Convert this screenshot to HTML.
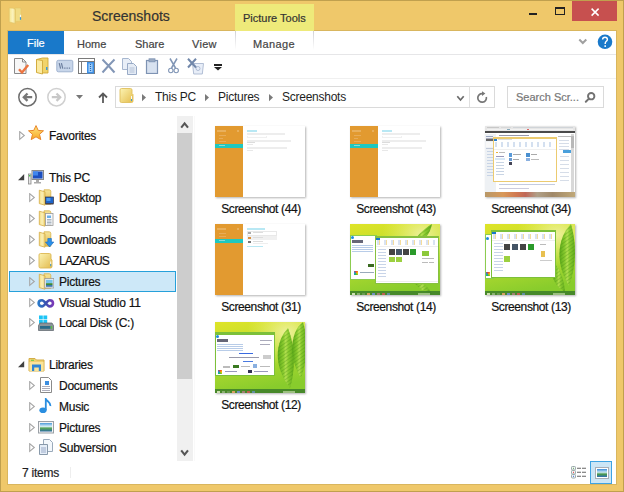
<!DOCTYPE html>
<html><head><meta charset="utf-8">
<style>
*{margin:0;padding:0;box-sizing:border-box}
html,body{width:624px;height:492px;overflow:hidden}
body{position:relative;background:#efc86a;font-family:"Liberation Sans",sans-serif;font-size:11.5px;color:#111}
.a{position:absolute}
.t{position:absolute;white-space:nowrap;line-height:12px;-webkit-text-stroke:0.2px currentColor}
.n{position:absolute;white-space:nowrap;line-height:12px;font-size:12px;letter-spacing:-0.25px;-webkit-text-stroke:0.2px currentColor}
</style></head><body>
<div class="a" style="left:0;top:0;width:624px;height:492px;border:1px solid #c0a04e"></div>
<!-- app icon -->
<svg class="a" style="left:8px;top:7px" width="15" height="17"><defs><linearGradient id="ai" x1="0" y1="0" x2="1" y2="0"><stop offset="0" stop-color="#f6e690"/><stop offset=".6" stop-color="#fbf3c0"/><stop offset="1" stop-color="#e9d070"/></linearGradient></defs>
<path d="M7 1h5.5l0.5 .5v12.5l-6 0.5z" fill="#f1dc84" stroke="#e2c868" stroke-width=".6"/>
<path d="M1.2 1l4 .2l2.3 1.3v14l-6.3-1.5z" fill="url(#ai)" stroke="#e0c468" stroke-width=".6"/>
<rect x="11.9" y="7.8" width="1.2" height="2.4" fill="#f8f8f0"/><rect x="11.9" y="10.2" width="1.2" height="2.6" fill="#3a9ad8"/></svg>
<div class="t" style="left:92px;top:8px;font-size:14px;line-height:16px;color:#333">Screenshots</div>
<!-- picture tools -->
<!-- window buttons -->
<div class="a" style="left:529px;top:13px;width:8px;height:2px;background:#222"></div>
<div class="a" style="left:555px;top:7px;width:10px;height:8px;border:1px solid #222;border-top-width:2px"></div>
<div class="a" style="left:572px;top:1px;width:45px;height:20px;background:#c7504f"></div>
<svg class="a" style="left:591px;top:7.5px" width="9" height="9"><path d="M0.6 0.6L7.6 7.6M7.6 0.6L0.6 7.6" stroke="#fff" stroke-width="1.5"/></svg>
<!-- client -->
<div class="a" style="left:7px;top:30px;width:610px;height:455px;background:#fff;border:1px solid #d9b65e"></div>
<div class="a" style="left:235px;top:4px;width:79px;height:27px;background:#eeea7a"></div>
<div class="t" style="left:243px;top:12px;color:#333;font-size:11px">Picture Tools</div>
<!-- ribbon tabs -->
<div class="a" style="left:8px;top:31px;width:56px;height:23px;background:#1979ca"></div>
<div class="t" style="left:27px;top:37px;color:#fff;font-size:11px">File</div>
<div class="t" style="left:77px;top:38px;color:#444;font-size:11px">Home</div>
<div class="t" style="left:135px;top:38px;color:#444;font-size:11px">Share</div>
<div class="t" style="left:192px;top:38px;color:#444;font-size:11px;letter-spacing:0.3px">View</div>
<div class="t" style="left:253px;top:38px;color:#444;font-size:11px;letter-spacing:0.35px">Manage</div>
<div class="a" style="left:235px;top:31px;width:1px;height:19px;background:linear-gradient(#d0d0d4,#fff)"></div>
<div class="a" style="left:313px;top:31px;width:1px;height:19px;background:linear-gradient(#d0d0d4,#fff)"></div>
<svg class="a" style="left:578px;top:38px" width="10" height="8"><path d="M1.3 1.5L4.8 5L8.3 1.5" stroke="#a0a0a0" stroke-width="2" fill="none"/></svg>
<svg class="a" style="left:597px;top:34px" width="16" height="16"><circle cx="8" cy="7.8" r="7.3" fill="#1979ca"/><path d="M5.6 5.6C5.6 4 6.7 3.2 8 3.2C9.4 3.2 10.4 4.1 10.4 5.4C10.4 7.2 8.2 7.3 8.2 9.4V10" stroke="#fff" stroke-width="1.4" fill="none"/><rect x="7.4" y="11.3" width="1.6" height="1.6" fill="#fff"/></svg>
<div class="a" style="left:8px;top:54px;width:608px;height:1px;background:#e6e6e8"></div>
<div class="a" style="left:8px;top:78px;width:608px;height:1px;background:#f0f0f0"></div>
<!-- QAT icons placeholder -->
<svg class="a" style="left:13px;top:57px" width="17" height="18"><path d="M1.5 1.5h8l3.5 3.5v11.5H1.5z" fill="#f7f7f7" stroke="#8a8a8a"/><path d="M9.5 1.5v3.5h3.5" fill="none" stroke="#8a8a8a"/><path d="M6 12.3l3 3.2l6.2-7.5" stroke="#ec7440" stroke-width="2.4" fill="none"/></svg>
<svg class="a" style="left:35px;top:57px" width="15" height="18"><path d="M1.5 2.5l6-1.5h5.5v15h-5.5l-6-1z" fill="#f1d46a" stroke="#d0a838" stroke-width=".9"/><path d="M1.5 2.5l6 1v13.5l-6-1.5z" fill="#fbeaa0" stroke="#d0a838" stroke-width=".9"/><rect x="11" y="10" width="1.5" height="3" fill="#3a9ad8"/></svg>
<svg class="a" style="left:56px;top:59px" width="18" height="15"><rect x="0.8" y="1.3" width="16" height="11.5" rx="1.5" fill="#c8d6ea" stroke="#9fb2cf"/><path d="M3.2 4.2L4.6 9.6M5.4 4.2L6.8 9.6M8.2 9.2h1.3M10.5 9.2h1.3M12.8 9.2h1.3" stroke="#6b7e9e" stroke-width="1.2" fill="none"/></svg>
<svg class="a" style="left:78px;top:58px" width="17" height="16"><rect x="0.5" y="0.5" width="16" height="15" fill="#fff" stroke="#7a7a7a"/><path d="M0.5 3.5h16M3.5 3.5v12" stroke="#7a7a7a"/><rect x="9" y="4" width="7" height="11.5" fill="#3d8fe6"/><rect x="10.5" y="5.5" width="4" height="8.5" fill="#9fcdf8"/><path d="M12.5 6v7.5" stroke="#2666b0" stroke-width="1.2" stroke-dasharray="1 1"/></svg>
<svg class="a" style="left:101px;top:58px" width="15" height="16"><path d="M1.5 1.5Q7.5 7.5 13.5 14.5M13.5 1.5Q7.5 7.5 1.5 14.5" stroke="#8296b6" stroke-width="2"/></svg>
<svg class="a" style="left:122px;top:58px" width="16" height="17"><path d="M0.5 0.5h6l3 3v8h-9z" fill="#e8eef7" stroke="#a6b6cf"/><path d="M5.5 5.5h6l3 3v8h-9z" fill="#e4ebf5" stroke="#98aac6"/><path d="M7.5 10h5M7.5 12h5M7.5 14h5" stroke="#a6b6cf" stroke-width=".8"/></svg>
<svg class="a" style="left:145px;top:58px" width="14" height="16"><rect x="1.5" y="2.5" width="11" height="13" fill="#d8e2f0" stroke="#7e93b3" stroke-width="1.2"/><rect x="4" y="0.8" width="6" height="3" fill="#9aaac2" stroke="#7e93b3" stroke-width=".8"/></svg>
<svg class="a" style="left:168px;top:58px" width="11" height="16"><path d="M2 0.5L7.5 10M9 0.5L3.5 10" stroke="#8196b6" stroke-width="1.5"/><circle cx="2.8" cy="12.5" r="2.2" fill="none" stroke="#8196b6" stroke-width="1.1"/><circle cx="8.2" cy="12.5" r="2.2" fill="none" stroke="#8196b6" stroke-width="1.1"/></svg>
<svg class="a" style="left:187px;top:58px" width="18" height="17"><path d="M5.5 5.5h11l-1.2 10.5h-8.6z" fill="#e8eef8" stroke="#aab8d0" stroke-width=".9"/><circle cx="11" cy="10.5" r="2" fill="none" stroke="#aab8d0" stroke-width=".9"/><path d="M1 0.8L9 9.5M9 0.8L1 9.5" stroke="#7187aa" stroke-width="2"/></svg>
<svg class="a" style="left:214px;top:63px" width="9" height="8"><rect x="0" y="1" width="8" height="2" fill="#222"/><path d="M0 4H8L4 7.5z" fill="#222"/></svg>
<!-- nav buttons -->
<svg class="a" style="left:17px;top:86.8px" width="22" height="22"><circle cx="10.5" cy="10.2" r="8.7" fill="none" stroke="#6d6d6d" stroke-width="1.5"/><path d="M15.2 10.2H7M10.5 6.5L6.8 10.2L10.5 13.9" stroke="#777" stroke-width="2.3" fill="none"/></svg>
<svg class="a" style="left:45.5px;top:86.8px" width="22" height="22"><circle cx="10.5" cy="10.2" r="8.7" fill="none" stroke="#d0d0d0" stroke-width="1.5"/><path d="M5.8 10.2H14M10.5 6.5L14.2 10.2L10.5 13.9" stroke="#c8c8c8" stroke-width="2.3" fill="none"/></svg>
<svg class="a" style="left:75px;top:94px" width="10" height="6"><path d="M1 1H8L4.5 5z" fill="#777"/></svg>
<svg class="a" style="left:96.5px;top:91px" width="12" height="13"><path d="M6 12V2.5M2 6.5L6 2.5L10 6.5" stroke="#5a5a5a" stroke-width="1.8" fill="none"/></svg>
<!-- address -->
<div class="a" style="left:115px;top:86px;width:380px;height:22px;border:1px solid #dadada"></div>
<div class="a" style="left:469px;top:86px;width:1px;height:21px;background:#e0e0e0"></div>
<svg class="a" style="left:118.5px;top:87px" width="16" height="17"><defs><linearGradient id="fg" x1="0" y1="0" x2="1" y2="1"><stop offset="0" stop-color="#fcf4b4"/><stop offset="1" stop-color="#e4bd4e"/></linearGradient></defs><path d="M2.5 1.5h9a1.5 1.5 0 0 1 1.5 1.5v3.5l1 1v6.5a1.5 1.5 0 0 1-1.5 1.5h-10a1.5 1.5 0 0 1-1.5-1.5v-11a1.5 1.5 0 0 1 1.5-1.5z" fill="url(#fg)" stroke="#e0bf5c" stroke-width=".9"/><rect x="12" y="9" width="1" height="5" fill="#f8f8f8"/><rect x="12" y="12" width="1" height="2" fill="#3c9ad4"/></svg>
<svg class="a" style="left:142px;top:94px" width="5" height="8"><path d="M0 0L4 3.6L0 7.2z" fill="#7a7a7a"/></svg>
<div class="n" style="left:155px;top:91px;color:#1e1e1e;-webkit-text-stroke:0">This PC</div>
<svg class="a" style="left:205px;top:94px" width="5" height="8"><path d="M0 0L4 3.6L0 7.2z" fill="#7a7a7a"/></svg>
<div class="n" style="left:218px;top:91px;color:#1e1e1e;-webkit-text-stroke:0">Pictures</div>
<svg class="a" style="left:269px;top:94px" width="5" height="8"><path d="M0 0L4 3.6L0 7.2z" fill="#7a7a7a"/></svg>
<div class="n" style="left:282px;top:91px;color:#1e1e1e;-webkit-text-stroke:0">Screenshots</div>
<svg class="a" style="left:456px;top:94px" width="10" height="9"><path d="M1.3 2.2L4.5 6L7.7 2.2" stroke="#6a6a6a" stroke-width="1.7" fill="none"/></svg>
<svg class="a" style="left:475px;top:89px" width="14" height="15"><path d="M7.3 4.6A4.3 4.3 0 1 0 11.3 8" stroke="#777" stroke-width="1.7" fill="none"/><path d="M7 2.2L10.4 4.6L7 7z" fill="#777"/></svg>
<div class="a" style="left:507px;top:86px;width:97px;height:22px;border:1px solid #dadada"></div>
<div class="t" style="left:516px;top:91px;color:#777;font-size:11px">Search Scr...</div>
<svg class="a" style="left:583px;top:90px" width="13" height="14"><circle cx="8.2" cy="6.2" r="3.2" fill="none" stroke="#727272" stroke-width="1.9"/><path d="M6 8.6L2.8 11.8" stroke="#727272" stroke-width="2" stroke-linecap="round"/></svg>
<!-- nav pane placeholder -->
<svg class="a" style="left:19px;top:131px" width="7" height="10">
<path d="M0.7 0.7L5.3 4.5L0.7 8.3z" fill="none" stroke="#a6a6a6" stroke-width="1.1"/>
</svg>
<svg class="a" style="left:28px;top:125.0px" width="16" height="16">
<defs>
<linearGradient id="sg" x1="0" y1="0" x2="0" y2="1">
<stop offset="0" stop-color="#ffe680"/>
<stop offset="1" stop-color="#f6a623"/>
</linearGradient>
</defs>
<path d="M8 0.6L10.2 5.4L15.5 5.8L11.5 9.3L12.8 14.6L8 11.8L3.2 14.6L4.5 9.3L0.5 5.8L5.8 5.4z" fill="url(#sg)" stroke="#e8862a" stroke-width="1"/>
</svg>
<div class="n" style="left:49px;top:130px">Favorites</div>
<svg class="a" style="left:18px;top:174px" width="7" height="7">
<path d="M6.2 0V6.2H0z" fill="#404040"/>
</svg>
<svg class="a" style="left:28px;top:168.5px" width="16" height="16">
<rect x="0.5" y="5" width="2.5" height="10" fill="#e6e6e6" stroke="#888" stroke-width=".8"/>
<rect x="1" y="6" width="1.5" height="1.5" fill="#4c4"/>
<rect x="4" y="1.5" width="11.5" height="9" fill="#cfd8e6" stroke="#8a8a8a"/>
<rect x="5" y="2.5" width="9.5" height="7" fill="#1c4fc0"/>
<rect x="5" y="2.5" width="5" height="4" fill="#3f86ee"/>
<path d="M8 11h3v2h2v1.5H6V13h2z" fill="#aaa"/>
</svg>
<div class="n" style="left:49px;top:172px">This PC</div>
<svg class="a" style="left:29px;top:193px" width="7" height="10">
<path d="M0.7 0.7L5.3 4.5L0.7 8.3z" fill="none" stroke="#a6a6a6" stroke-width="1.1"/>
</svg>
<svg class="a" style="left:38px;top:188.5px" width="16" height="17">
<defs>
<linearGradient id="nf" x1="0" y1="0" x2="0" y2="1">
<stop offset="0" stop-color="#f6e59a"/>
<stop offset="1" stop-color="#dfb64a"/>
</linearGradient>
<linearGradient id="nf2" x1="0" y1="0" x2="1" y2="0">
<stop offset="0" stop-color="#f3dc80"/>
<stop offset=".5" stop-color="#fbf0b8"/>
<stop offset="1" stop-color="#ecd070"/>
</linearGradient>
</defs>
<path d="M6 0.8h5.2a1.6 1.6 0 0 1 1.6 1.6v12.8H6z" fill="url(#nf)" stroke="#d8b14a" stroke-width=".8"/>
<path d="M1.3 1.2l5.7 1.6v13.4l-5.7-1.6z" fill="url(#nf2)" stroke="#d4ac46" stroke-width=".8"/>
<rect x="7.5" y="8" width="8" height="6.5" fill="#1e64c8" stroke="#334" stroke-width=".7"/>
<rect x="8.5" y="9" width="4" height="3" fill="#4a9af0"/>
<rect x="7.5" y="14" width="8" height="1.5" fill="#445"/>
</svg>
<div class="n" style="left:59px;top:192px">Desktop</div>
<svg class="a" style="left:29px;top:214px" width="7" height="10">
<path d="M0.7 0.7L5.3 4.5L0.7 8.3z" fill="none" stroke="#a6a6a6" stroke-width="1.1"/>
</svg>
<svg class="a" style="left:38px;top:209.5px" width="16" height="17">
<defs>
<linearGradient id="nf" x1="0" y1="0" x2="0" y2="1">
<stop offset="0" stop-color="#f6e59a"/>
<stop offset="1" stop-color="#dfb64a"/>
</linearGradient>
<linearGradient id="nf2" x1="0" y1="0" x2="1" y2="0">
<stop offset="0" stop-color="#f3dc80"/>
<stop offset=".5" stop-color="#fbf0b8"/>
<stop offset="1" stop-color="#ecd070"/>
</linearGradient>
</defs>
<path d="M6 0.8h5.2a1.6 1.6 0 0 1 1.6 1.6v12.8H6z" fill="url(#nf)" stroke="#d8b14a" stroke-width=".8"/>
<path d="M1.3 1.2l5.7 1.6v13.4l-5.7-1.6z" fill="url(#nf2)" stroke="#d4ac46" stroke-width=".8"/>
<rect x="7.5" y="3.5" width="7.5" height="12" fill="#fafafa" stroke="#9a9a9a" stroke-width=".8"/>
<rect x="9" y="5.5" width="4" height="2.5" fill="#6ab0e8"/>
<path d="M9 9.5h4.5M9 11h4.5M9 12.5h4.5M9 14h4.5" stroke="#8899aa" stroke-width=".7"/>
</svg>
<div class="n" style="left:59px;top:213px">Documents</div>
<svg class="a" style="left:29px;top:235px" width="7" height="10">
<path d="M0.7 0.7L5.3 4.5L0.7 8.3z" fill="none" stroke="#a6a6a6" stroke-width="1.1"/>
</svg>
<svg class="a" style="left:38px;top:230.5px" width="16" height="17">
<defs>
<linearGradient id="nf" x1="0" y1="0" x2="0" y2="1">
<stop offset="0" stop-color="#f6e59a"/>
<stop offset="1" stop-color="#dfb64a"/>
</linearGradient>
<linearGradient id="nf2" x1="0" y1="0" x2="1" y2="0">
<stop offset="0" stop-color="#f3dc80"/>
<stop offset=".5" stop-color="#fbf0b8"/>
<stop offset="1" stop-color="#ecd070"/>
</linearGradient>
</defs>
<path d="M6 0.8h5.2a1.6 1.6 0 0 1 1.6 1.6v12.8H6z" fill="url(#nf)" stroke="#d8b14a" stroke-width=".8"/>
<path d="M1.3 1.2l5.7 1.6v13.4l-5.7-1.6z" fill="url(#nf2)" stroke="#d4ac46" stroke-width=".8"/>
<path d="M9.8 7.5h3.6v3.5h2.4l-4.2 5l-4.2-5h2.4z" fill="#2a90e8" stroke="#1a6ac0" stroke-width=".6"/>
</svg>
<div class="n" style="left:59px;top:234px">Downloads</div>
<svg class="a" style="left:29px;top:256px" width="7" height="10">
<path d="M0.7 0.7L5.3 4.5L0.7 8.3z" fill="none" stroke="#a6a6a6" stroke-width="1.1"/>
</svg>
<svg class="a" style="left:38px;top:251.5px" width="16" height="17">
<defs>
<linearGradient id="cf" x1="0" y1="0" x2="1" y2="1">
<stop offset="0" stop-color="#fcf4b4"/>
<stop offset="1" stop-color="#e2ba4c"/>
</linearGradient>
</defs>
<path d="M2.5 1.5h9a1.5 1.5 0 0 1 1.5 1.5v4l1 1v6.5a1.5 1.5 0 0 1-1.5 1.5h-10a1.5 1.5 0 0 1-1.5-1.5v-11.5a1.5 1.5 0 0 1 1.5-1.5z" fill="url(#cf)" stroke="#dcb852" stroke-width=".9"/>
<rect x="12.2" y="9.5" width="1" height="2.5" fill="#f8f8f8"/>
<rect x="12.2" y="12" width="1" height="2.2" fill="#3c9ad4"/>
</svg>
<div class="n" style="left:59px;top:255px;letter-spacing:-0.75px">LAZARUS</div>
<div class="a" style="left:9px;top:271px;width:167px;height:21px;background:#cde8f8;border:1px solid #26a0da">
</div>
<svg class="a" style="left:29px;top:277px" width="7" height="10">
<path d="M0.7 0.7L5.3 4.5L0.7 8.3z" fill="none" stroke="#a6a6a6" stroke-width="1.1"/>
</svg>
<svg class="a" style="left:38px;top:272.5px" width="16" height="17">
<defs>
<linearGradient id="nf" x1="0" y1="0" x2="0" y2="1">
<stop offset="0" stop-color="#f6e59a"/>
<stop offset="1" stop-color="#dfb64a"/>
</linearGradient>
<linearGradient id="nf2" x1="0" y1="0" x2="1" y2="0">
<stop offset="0" stop-color="#f3dc80"/>
<stop offset=".5" stop-color="#fbf0b8"/>
<stop offset="1" stop-color="#ecd070"/>
</linearGradient>
</defs>
<path d="M6 0.8h5.2a1.6 1.6 0 0 1 1.6 1.6v12.8H6z" fill="url(#nf)" stroke="#d8b14a" stroke-width=".8"/>
<path d="M1.3 1.2l5.7 1.6v13.4l-5.7-1.6z" fill="url(#nf2)" stroke="#d4ac46" stroke-width=".8"/>
<rect x="6.8" y="5.5" width="9" height="9.5" fill="#f2f2f2" stroke="#9a9a9a" stroke-width=".8"/>
<rect x="8" y="6.8" width="6.6" height="3.4" fill="#78c4ec"/>
<rect x="8" y="10.2" width="6.6" height="1.8" fill="#3a8a3a"/>
<rect x="8" y="12" width="6.6" height="1.8" fill="#3a78b0"/>
</svg>
<div class="n" style="left:59px;top:276px">Pictures</div>
<svg class="a" style="left:29px;top:298px" width="7" height="10">
<path d="M0.7 0.7L5.3 4.5L0.7 8.3z" fill="none" stroke="#a6a6a6" stroke-width="1.1"/>
</svg>
<svg class="a" style="left:37px;top:293.5px" width="18" height="16">
<defs>
<linearGradient id="vsg" x1="0" y1="0" x2="1" y2="0">
<stop offset="0" stop-color="#2a78c8"/>
<stop offset=".5" stop-color="#3a50b0"/>
<stop offset="1" stop-color="#7a3ab8"/>
</linearGradient>
</defs>
<path d="M5 6.2C2.9 6.2 1.6 7.6 1.6 9.3S2.9 12.4 5 12.4C7.8 12.4 9.8 6.2 12.6 6.2C14.7 6.2 16 7.6 16 9.3S14.7 12.4 12.6 12.4C9.8 12.4 7.8 6.2 5 6.2z" fill="none" stroke="url(#vsg)" stroke-width="2.6"/>
</svg>
<div class="n" style="left:59px;top:297px">Visual Studio 11</div>
<svg class="a" style="left:29px;top:318px" width="7" height="10">
<path d="M0.7 0.7L5.3 4.5L0.7 8.3z" fill="none" stroke="#a6a6a6" stroke-width="1.1"/>
</svg>
<svg class="a" style="left:38px;top:313.5px" width="17" height="18">
<rect x="1" y="1.5" width="3.8" height="3.8" fill="#1cc4f6"/>
<rect x="5.4" y="1.5" width="3.8" height="3.8" fill="#1cc4f6"/>
<rect x="1" y="5.9" width="3.8" height="3.8" fill="#1cc4f6"/>
<rect x="5.4" y="5.9" width="3.8" height="3.8" fill="#1cc4f6"/>
<path d="M0.5 11.5l1.5-2.5h12l1.5 2.5v5h-15z" fill="#8a949a" stroke="#5a6268" stroke-width=".7"/>
<rect x="2" y="12" width="10.5" height="2.8" fill="#2a6a88"/>
<rect x="12.8" y="12" width="1.3" height="2.8" fill="#5ac040"/>
</svg>
<div class="n" style="left:59px;top:317px">Local Disk (C:)</div>
<svg class="a" style="left:18px;top:361px" width="7" height="7">
<path d="M6.2 0V6.2H0z" fill="#404040"/>
</svg>
<svg class="a" style="left:28px;top:355.5px" width="17" height="16">
<path d="M1 2.5h6l1.5 1.5H16v11H1z" fill="#f0d070" stroke="#d4ad48"/>
<rect x="3" y="3.8" width="3" height="1" fill="#6c4"/>
<path d="M1.5 6h14v9h-14z" fill="#fae49a"/>
<path d="M4 8.5h9v6.5h-2.2v-3.5h-4.6v3.5H4z" fill="#2d86d6"/>
</svg>
<div class="n" style="left:49px;top:359px">Libraries</div>
<svg class="a" style="left:29px;top:381px" width="7" height="10">
<path d="M0.7 0.7L5.3 4.5L0.7 8.3z" fill="none" stroke="#a6a6a6" stroke-width="1.1"/>
</svg>
<svg class="a" style="left:38px;top:376.5px" width="16" height="16">
<path d="M2.5 0.5h8l3 3v12h-11z" fill="#fff" stroke="#8a8a8a"/>
<rect x="7" y="4" width="4" height="4" fill="#3c8ee0"/>
<path d="M4 9.5h8M4 11.5h8M4 13.5h8" stroke="#99a" stroke-width=".8"/>
</svg>
<div class="n" style="left:59px;top:380px">Documents</div>
<svg class="a" style="left:29px;top:402px" width="7" height="10">
<path d="M0.7 0.7L5.3 4.5L0.7 8.3z" fill="none" stroke="#a6a6a6" stroke-width="1.1"/>
</svg>
<svg class="a" style="left:38px;top:397.5px" width="16" height="16">
<ellipse cx="5" cy="12.2" rx="3.6" ry="2.8" fill="#2a8ee0"/>
<path d="M7.8 12V1c1.5 2.5 5 3.5 4.5 7" stroke="#2a8ee0" stroke-width="1.8" fill="none"/>
</svg>
<div class="n" style="left:59px;top:401px">Music</div>
<svg class="a" style="left:29px;top:423px" width="7" height="10">
<path d="M0.7 0.7L5.3 4.5L0.7 8.3z" fill="none" stroke="#a6a6a6" stroke-width="1.1"/>
</svg>
<svg class="a" style="left:38px;top:418.5px" width="16" height="16">
<defs>
<linearGradient id="lpg" x1="0" y1="0" x2="0" y2="1">
<stop offset="0" stop-color="#4a9ad8"/>
<stop offset=".4" stop-color="#d8eef8"/>
<stop offset=".6" stop-color="#58a858"/>
<stop offset="1" stop-color="#2a6aa0"/>
</linearGradient>
</defs>
<rect x="0.5" y="2.5" width="15" height="11.5" fill="#f4f4f4" stroke="#9aa0a6"/>
<rect x="2" y="4" width="12" height="8.5" fill="url(#lpg)"/>
</svg>
<div class="n" style="left:59px;top:422px">Pictures</div>
<svg class="a" style="left:29px;top:443px" width="7" height="10">
<path d="M0.7 0.7L5.3 4.5L0.7 8.3z" fill="none" stroke="#a6a6a6" stroke-width="1.1"/>
</svg>
<svg class="a" style="left:38px;top:438.5px" width="16" height="16">
<path d="M5.5 0.5h6l3 3v9h-9z" fill="#f4f8fc" stroke="#9aaabb"/>
<path d="M1.5 5.5h8v10h-8z" fill="#e6eef8" stroke="#8899aa"/>
<path d="M3 9h5M3 11h5M3 13h5" stroke="#8899bb" stroke-width=".8"/>
</svg>
<div class="n" style="left:59px;top:442px">Subversion</div>
<!-- scrollbar -->
<div class="a" style="left:177px;top:116px;width:16px;height:345px;background:#f0f0f0"></div>
<div class="a" style="left:194px;top:116px;width:1px;height:345px;background:#f9f9f9"></div>
<div class="a" style="left:177px;top:133px;width:15px;height:246px;background:#cdcdcd"></div>
<svg class="a" style="left:180px;top:121px" width="10" height="8"><path d="M1.2 6.6L4.6 2.4L8 6.6" stroke="#555" stroke-width="2.1" fill="none"/></svg>
<svg class="a" style="left:180px;top:449px" width="10" height="8"><path d="M1.2 1.4L4.6 5.6L8 1.4" stroke="#555" stroke-width="2.1" fill="none"/></svg>
<!-- content placeholder -->
<div class="a" style="left:215px;top:126px;width:90px;height:71px;background:#fff;box-shadow:1px 1px 2px rgba(0,0,0,.3);overflow:hidden">
<div class="a" style="left:0px;top:0px;width:28px;height:72px;background:#e29a30;">
</div>
<div class="a" style="left:0px;top:18px;width:28px;height:4px;background:#1ec8c0;">
</div>
<div class="a" style="left:2px;top:4px;width:9px;height:2px;background:#e9b05c;">
</div>
<div class="a" style="left:22px;top:4px;width:2px;height:2px;background:#e9b05c;">
</div>
<div class="a" style="left:4px;top:9px;width:7px;height:1px;background:#e8ac58;">
</div>
<div class="a" style="left:4px;top:12px;width:4px;height:1px;background:#e8ac58;">
</div>
<div class="a" style="left:4px;top:15px;width:7px;height:1px;background:#e8ac58;">
</div>
<div class="a" style="left:4px;top:19px;width:6px;height:1px;background:#8adcd6;">
</div>
<div class="a" style="left:32px;top:4px;width:10px;height:2px;background:#b8e8f4;">
</div>
<div class="a" style="left:32px;top:7px;width:38px;height:2px;background:#ededed;">
</div>
<div class="a" style="left:32px;top:10px;width:20px;height:2px;background:;border:1px solid #f0f0f0;border-top:0">
</div>
<div class="a" style="left:32px;top:14px;width:44px;height:2px;background:#ededed;">
</div>
<div class="a" style="left:32px;top:16px;width:8px;height:1px;background:#dcdcdc;">
</div>
<div class="a" style="left:32px;top:18px;width:6px;height:1px;background:#e8e8e8;">
</div>
<div class="a" style="left:32px;top:21px;width:40px;height:2px;background:#ededed;">
</div>
<div class="a" style="left:32px;top:24px;width:6px;height:1px;background:#e8e8e8;">
</div>
</div>
<div class="t" style="left:196px;top:203px;width:130px;text-align:center;font-size:12px;letter-spacing:-0.38px">Screenshot (44)</div>
<div class="a" style="left:350px;top:126px;width:90px;height:71px;background:#fff;box-shadow:1px 1px 2px rgba(0,0,0,.3);overflow:hidden">
<div class="a" style="left:0px;top:0px;width:28px;height:72px;background:#e29a30;">
</div>
<div class="a" style="left:0px;top:18px;width:28px;height:4px;background:#1ec8c0;">
</div>
<div class="a" style="left:2px;top:4px;width:9px;height:2px;background:#e9b05c;">
</div>
<div class="a" style="left:22px;top:4px;width:2px;height:2px;background:#e9b05c;">
</div>
<div class="a" style="left:4px;top:9px;width:7px;height:1px;background:#e8ac58;">
</div>
<div class="a" style="left:4px;top:12px;width:4px;height:1px;background:#e8ac58;">
</div>
<div class="a" style="left:4px;top:15px;width:7px;height:1px;background:#e8ac58;">
</div>
<div class="a" style="left:4px;top:19px;width:6px;height:1px;background:#8adcd6;">
</div>
<div class="a" style="left:32px;top:4px;width:10px;height:2px;background:#b8e8f4;">
</div>
<div class="a" style="left:32px;top:7px;width:38px;height:2px;background:#ededed;">
</div>
<div class="a" style="left:32px;top:10px;width:20px;height:2px;background:;border:1px solid #f0f0f0;border-top:0">
</div>
<div class="a" style="left:32px;top:14px;width:44px;height:2px;background:#ededed;">
</div>
<div class="a" style="left:32px;top:16px;width:8px;height:1px;background:#dcdcdc;">
</div>
<div class="a" style="left:32px;top:18px;width:6px;height:1px;background:#e8e8e8;">
</div>
<div class="a" style="left:32px;top:21px;width:40px;height:2px;background:#ededed;">
</div>
<div class="a" style="left:32px;top:24px;width:6px;height:1px;background:#e8e8e8;">
</div>
</div>
<div class="t" style="left:331px;top:203px;width:130px;text-align:center;font-size:12px;letter-spacing:-0.38px">Screenshot (43)</div>
<div class="a" style="left:485px;top:126px;width:90px;height:71px;background:#fafafa;box-shadow:1px 1px 2px rgba(0,0,0,.3);overflow:hidden">
<div class="a" style="left:0px;top:0px;width:90px;height:5px;background:#e6e6e6;">
</div>
<div class="a" style="left:2px;top:1px;width:12px;height:1px;background:#c8c8c8;">
</div>
<div class="a" style="left:16px;top:1px;width:10px;height:1px;background:#d8d8d8;">
</div>
<div class="a" style="left:28px;top:1px;width:60px;height:1px;background:#d0d4d8;">
</div>
<div class="a" style="left:2px;top:3px;width:86px;height:1px;background:#f2f2f2;">
</div>
<div class="a" style="left:22px;top:3px;width:3px;height:1px;background:#8ab;">
</div>
<div class="a" style="left:42px;top:3px;width:2px;height:1px;background:#d66;">
</div>
<div class="a" style="left:0px;top:5px;width:90px;height:2px;background:#4a4a4a;">
</div>
<div class="a" style="left:0px;top:7px;width:90px;height:59px;background:#fff;">
</div>
<div class="a" style="left:0px;top:8px;width:11px;height:58px;background:#eef1f4;">
</div>
<div class="a" style="left:1px;top:10px;width:7px;height:1px;background:#9aa6c0;">
</div>
<div class="a" style="left:1px;top:12px;width:8px;height:1px;background:#aab;">
</div>
<div class="a" style="left:1px;top:13px;width:9px;height:2px;background:#666;">
</div>
<div class="a" style="left:1px;top:16px;width:8px;height:5px;background:#f8f8f8;">
</div>
<div class="a" style="left:1px;top:22px;width:9px;height:1px;background:#c0c8d8;">
</div>
<div class="a" style="left:2px;top:25px;width:8px;height:26px;background:repeating-linear-gradient(#c8d4e6 0 1px,#eef1f4 1px 3px);">
</div>
<div class="a" style="left:14px;top:9px;width:30px;height:1px;background:#99a;">
</div>
<div class="a" style="left:73px;top:10px;width:13px;height:1px;background:#bbb;">
</div>
<div class="a" style="left:74px;top:14px;width:10px;height:12px;background:repeating-linear-gradient(#d6dde8 0 1px,#fff 1px 3px);">
</div>
<div class="a" style="left:78px;top:24px;width:9px;height:3px;background:#4aa0dc;">
</div>
<div class="a" style="left:75px;top:30px;width:9px;height:28px;background:repeating-linear-gradient(#d6dde8 0 1px,#fff 1px 4px);">
</div>
<div class="a" style="left:86px;top:8px;width:3px;height:58px;background:#d8d8d8;">
</div>
<div class="a" style="left:86px;top:10px;width:3px;height:12px;background:#b8b8b8;">
</div>
<div class="a" style="left:14px;top:58px;width:56px;height:1px;background:#c4cce0;">
</div>
<div class="a" style="left:14px;top:62px;width:30px;height:1px;background:#ccd;">
</div>
<div class="a" style="left:8px;top:11px;width:64px;height:45px;background:#fff;border:1px solid #eccb70;border-top-width:2px">
</div>
<div class="a" style="left:9px;top:13px;width:3px;height:2px;background:#2a80d0;">
</div>
<div class="a" style="left:13px;top:13px;width:14px;height:1px;background:#ddd;">
</div>
<div class="a" style="left:10px;top:16px;width:58px;height:5px;background:repeating-linear-gradient(90deg,#d4e0f0 0 2px,#fff 2px 6px);">
</div>
<div class="a" style="left:9px;top:23px;width:62px;height:1px;background:#f0f0f0;">
</div>
<div class="a" style="left:11px;top:26px;width:2px;height:1px;background:#e8b040;">
</div>
<div class="a" style="left:14px;top:26px;width:6px;height:1px;background:#bbb;">
</div>
<div class="a" style="left:11px;top:30px;width:8px;height:1px;background:#99b;">
</div>
<div class="a" style="left:10px;top:32px;width:10px;height:2px;background:#d8e8f6;">
</div>
<div class="a" style="left:11px;top:36px;width:8px;height:14px;background:repeating-linear-gradient(#c8d4e4 0 1px,#fff 1px 3px);">
</div>
<div class="a" style="left:24px;top:27px;width:3px;height:4px;background:#5a9ad8;">
</div>
<div class="a" style="left:28px;top:28px;width:8px;height:1px;background:#aaa;">
</div>
<div class="a" style="left:41px;top:27px;width:4px;height:4px;background:#4a90d0;">
</div>
<div class="a" style="left:46px;top:28px;width:6px;height:1px;background:#aaa;">
</div>
<div class="a" style="left:24px;top:32px;width:3px;height:3px;background:#6a9ad0;">
</div>
<div class="a" style="left:28px;top:33px;width:6px;height:1px;background:#aaa;">
</div>
<div class="a" style="left:41px;top:32px;width:4px;height:3px;background:#8ab0e0;">
</div>
<div class="a" style="left:46px;top:33px;width:8px;height:1px;background:#bbb;">
</div>
<div class="a" style="left:24px;top:36px;width:3px;height:3px;background:#445;">
</div>
<div class="a" style="left:0px;top:66px;width:90px;height:6px;background:linear-gradient(90deg,#b89868,#d89858 20%,#d07850 35%,#c06858 45%,#b0a088 58%,#a08868 75%,#c0a878);">
</div>
</div>
<div class="t" style="left:466px;top:203px;width:130px;text-align:center;font-size:12px;letter-spacing:-0.38px">Screenshot (34)</div>
<div class="a" style="left:215px;top:224px;width:90px;height:71px;background:#fff;box-shadow:1px 1px 2px rgba(0,0,0,.3);overflow:hidden">
<div class="a" style="left:0px;top:0px;width:28px;height:72px;background:#e29a30;">
</div>
<div class="a" style="left:0px;top:15px;width:28px;height:4px;background:#1ec8c0;">
</div>
<div class="a" style="left:2px;top:4px;width:9px;height:2px;background:#e9b05c;">
</div>
<div class="a" style="left:22px;top:4px;width:2px;height:2px;background:#e9b05c;">
</div>
<div class="a" style="left:4px;top:9px;width:7px;height:1px;background:#e8ac58;">
</div>
<div class="a" style="left:4px;top:12px;width:7px;height:1px;background:#e8ac58;">
</div>
<div class="a" style="left:4px;top:16px;width:6px;height:1px;background:#8adcd6;">
</div>
<div class="a" style="left:32px;top:4px;width:18px;height:2px;background:#b8e8f4;">
</div>
<div class="a" style="left:32px;top:7px;width:30px;height:5px;background:#fff;border:1px solid #e8e8e8">
</div>
<div class="a" style="left:33px;top:8px;width:3px;height:2px;background:#aaa;">
</div>
<div class="a" style="left:38px;top:8px;width:10px;height:1px;background:#ddd;">
</div>
<div class="a" style="left:32px;top:12px;width:30px;height:4px;background:#f0f0f0;">
</div>
<div class="a" style="left:33px;top:13px;width:3px;height:2px;background:#d89040;">
</div>
<div class="a" style="left:38px;top:13px;width:10px;height:1px;background:#ddd;">
</div>
<div class="a" style="left:33px;top:17px;width:3px;height:2px;background:#777;">
</div>
<div class="a" style="left:38px;top:17px;width:10px;height:1px;background:#ddd;">
</div>
<div class="a" style="left:38px;top:19px;width:15px;height:1px;background:#eee;">
</div>
<div class="a" style="left:32px;top:22px;width:16px;height:1px;background:#b8e8f4;">
</div>
</div>
<div class="t" style="left:196px;top:301px;width:130px;text-align:center;font-size:12px;letter-spacing:-0.38px">Screenshot (31)</div>
<div class="a" style="left:350px;top:224px;width:90px;height:71px;box-shadow:1px 1px 2px rgba(0,0,0,.3);overflow:hidden">
<svg class="a" style="left:0;top:0" width="90" height="72">
<defs>
<linearGradient id="gbg" x1="0" y1="0" x2="0.25" y2="1">
<stop offset="0" stop-color="#dfe428"/>
<stop offset=".5" stop-color="#b8dc30"/>
<stop offset="1" stop-color="#88cc2c"/>
</linearGradient>
<radialGradient id="gtr" cx="0.8" cy="0.15" r="0.45">
<stop offset="0" stop-color="#f4f4b0" stop-opacity=".85"/>
<stop offset="1" stop-color="#f0f070" stop-opacity="0"/>
</radialGradient>
<linearGradient id="lf" x1="0" y1="0" x2="1" y2="0">
<stop offset="0" stop-color="#5aa818"/>
<stop offset=".35" stop-color="#8ccc30"/>
<stop offset=".5" stop-color="#b4e050"/>
<stop offset=".65" stop-color="#8ccc30"/>
<stop offset="1" stop-color="#62ac1c"/>
</linearGradient>
<pattern id="vein" width="3" height="3" patternUnits="userSpaceOnUse" patternTransform="rotate(-35)">
<rect width="3" height="1" fill="#4a9014" opacity=".35"/>
</pattern>
</defs>
<rect width="90" height="72" fill="url(#gbg)"/>
<rect width="90" height="72" fill="url(#gtr)"/>
<path d="M82 0C72 6 64 14 62 24C74 18 80 10 82 0z" fill="url(#lf)"/>
<path d="M82 0C72 6 64 14 62 24C74 18 80 10 82 0z" fill="url(#vein)"/>
<path d="M62 56C68 64 74 68 82 70C78 62 72 58 62 56z" fill="url(#lf)"/>
<path d="M62 56C68 64 74 68 82 70C78 62 72 58 62 56z" fill="url(#vein)"/>
<rect y="67" width="90" height="5" fill="#3c7c2a" opacity=".85"/>
</svg>
<div class="a" style="left:0px;top:11px;width:27px;height:45px;background:#fff;border:1px solid #8ccc50">
</div>
<div class="a" style="left:1px;top:12px;width:3px;height:3px;background:#1a8ae0;border-radius:50%">
</div>
<div class="a" style="left:2px;top:16px;width:11px;height:3px;background:#667;">
</div>
<div class="a" style="left:2px;top:21px;width:21px;height:8px;background:repeating-linear-gradient(#b8cce8 0 1px,#fff 1px 2px);">
</div>
<div class="a" style="left:18px;top:40px;width:6px;height:3px;background:#3a6a20;">
</div>
<div class="a" style="left:4px;top:47px;width:4px;height:4px;background:conic-gradient(#e33,#fc0,#3b3,#19e,#e33);">
</div>
<div class="a" style="left:10px;top:48px;width:14px;height:1px;background:#9ab;">
</div>
<div class="a" style="left:25px;top:12px;width:64px;height:48px;background:#fff;border:1px solid #86c040;border-top-width:2px">
</div>
<div class="a" style="left:26px;top:14px;width:4px;height:2px;background:#1979ca;">
</div>
<div class="a" style="left:27px;top:16px;width:58px;height:5px;background:repeating-linear-gradient(90deg,#d8e2f2 0 2px,#f4dc9c 2px 3px,#fff 3px 7px);">
</div>
<div class="a" style="left:26px;top:22px;width:62px;height:1px;background:#eee;">
</div>
<div class="a" style="left:28px;top:25px;width:8px;height:28px;background:repeating-linear-gradient(#c8d4e8 0 1px,#fff 1px 3px);">
</div>
<div class="a" style="left:39px;top:25px;width:6px;height:6px;background:#444;">
</div>
<div class="a" style="left:46px;top:25px;width:6px;height:6px;background:#456;">
</div>
<div class="a" style="left:53px;top:25px;width:6px;height:6px;background:#444;">
</div>
<div class="a" style="left:60px;top:25px;width:6px;height:6px;background:#2a9a2a;">
</div>
<div class="a" style="left:39px;top:33px;width:6px;height:5px;background:#9cd040;">
</div>
<div class="a" style="left:46px;top:33px;width:6px;height:5px;background:#9cd040;">
</div>
<div class="a" style="left:72px;top:27px;width:7px;height:5px;background:#8cc83a;">
</div>
<div class="a" style="left:72px;top:34px;width:12px;height:1px;background:#bbb;">
</div>
<div class="a" style="left:72px;top:38px;width:6px;height:1px;background:#bbb;">
</div>
<div class="a" style="left:79px;top:38px;width:5px;height:1px;background:#bbb;">
</div>
<div class="a" style="left:26px;top:57px;width:62px;height:1px;background:#eee;">
</div>
<div class="a" style="left:2px;top:69px;width:3px;height:2px;background:#cde0b0;">
</div>
<div class="a" style="left:7px;top:69px;width:3px;height:2px;background:#8ab070;">
</div>
<div class="a" style="left:12px;top:69px;width:3px;height:2px;background:#6a9a50;">
</div>
<div class="a" style="left:17px;top:69px;width:3px;height:2px;background:#d8a060;">
</div>
<div class="a" style="left:22px;top:69px;width:3px;height:2px;background:#7090c0;">
</div>
<div class="a" style="left:27px;top:69px;width:3px;height:2px;background:#a08070;">
</div>
<div class="a" style="left:32px;top:69px;width:3px;height:2px;background:#c06050;">
</div>
<div class="a" style="left:37px;top:69px;width:3px;height:2px;background:#6090a0;">
</div>
<div class="a" style="left:68px;top:69px;width:12px;height:2px;background:#9cc080;">
</div>
</div>
<div class="t" style="left:331px;top:301px;width:130px;text-align:center;font-size:12px;letter-spacing:-0.38px">Screenshot (14)</div>
<div class="a" style="left:485px;top:224px;width:90px;height:71px;box-shadow:1px 1px 2px rgba(0,0,0,.3);overflow:hidden">
<svg class="a" style="left:0;top:0" width="90" height="72">
<defs>
<linearGradient id="gbg" x1="0" y1="0" x2="0.25" y2="1">
<stop offset="0" stop-color="#dfe428"/>
<stop offset=".5" stop-color="#b8dc30"/>
<stop offset="1" stop-color="#88cc2c"/>
</linearGradient>
<radialGradient id="gtr" cx="0.8" cy="0.15" r="0.45">
<stop offset="0" stop-color="#f4f4b0" stop-opacity=".85"/>
<stop offset="1" stop-color="#f0f070" stop-opacity="0"/>
</radialGradient>
<linearGradient id="lf" x1="0" y1="0" x2="1" y2="0">
<stop offset="0" stop-color="#5aa818"/>
<stop offset=".35" stop-color="#8ccc30"/>
<stop offset=".5" stop-color="#b4e050"/>
<stop offset=".65" stop-color="#8ccc30"/>
<stop offset="1" stop-color="#62ac1c"/>
</linearGradient>
<pattern id="vein" width="3" height="3" patternUnits="userSpaceOnUse" patternTransform="rotate(-35)">
<rect width="3" height="1" fill="#4a9014" opacity=".35"/>
</pattern>
</defs>
<rect width="90" height="72" fill="url(#gbg)"/>
<rect width="90" height="72" fill="url(#gtr)"/>
<path d="M86 0C72 14 70 40 84 62C91 44 92 20 86 0z" fill="url(#lf)"/>
<path d="M86 0C72 14 70 40 84 62C91 44 92 20 86 0z" fill="url(#vein)"/>
<path d="M70 40C64 52 70 62 80 68C79 58 77 48 70 40z" fill="url(#lf)"/>
<path d="M70 40C64 52 70 62 80 68C79 58 77 48 70 40z" fill="url(#vein)"/>
<rect y="67" width="90" height="5" fill="#3c7c2a" opacity=".85"/>
</svg>
<div class="a" style="left:0px;top:10px;width:9px;height:45px;background:#fff;border:1px solid #8ccc50">
</div>
<div class="a" style="left:1px;top:13px;width:3px;height:3px;background:#1a8ae0;border-radius:50%">
</div>
<div class="a" style="left:1px;top:48px;width:4px;height:4px;background:conic-gradient(#e33,#fc0,#3b3,#19e,#e33);">
</div>
<div class="a" style="left:6px;top:6px;width:65px;height:48px;background:#fff;border:1px solid #7cc03a;border-top-width:2px">
</div>
<div class="a" style="left:7px;top:8px;width:4px;height:2px;background:#1979ca;">
</div>
<div class="a" style="left:8px;top:10px;width:60px;height:5px;background:repeating-linear-gradient(90deg,#d8e2f2 0 2px,#f4dc9c 2px 3px,#fff 3px 7px);">
</div>
<div class="a" style="left:7px;top:16px;width:63px;height:1px;background:#eee;">
</div>
<div class="a" style="left:9px;top:19px;width:9px;height:30px;background:repeating-linear-gradient(#c8d4e8 0 1px,#fff 1px 3px);">
</div>
<div class="a" style="left:19px;top:20px;width:6px;height:6px;background:#444;">
</div>
<div class="a" style="left:27px;top:20px;width:6px;height:6px;background:#456;">
</div>
<div class="a" style="left:35px;top:20px;width:6px;height:6px;background:#444;">
</div>
<div class="a" style="left:43px;top:20px;width:6px;height:6px;background:#2a9a2a;">
</div>
<div class="a" style="left:19px;top:32px;width:6px;height:6px;background:#9cd040;">
</div>
<div class="a" style="left:55px;top:20px;width:6px;height:1px;background:#bbb;">
</div>
<div class="a" style="left:56px;top:27px;width:4px;height:6px;background:#e8c050;">
</div>
<div class="a" style="left:55px;top:36px;width:12px;height:1px;background:#ccc;">
</div>
<div class="a" style="left:2px;top:69px;width:3px;height:2px;background:#cde0b0;">
</div>
<div class="a" style="left:7px;top:69px;width:3px;height:2px;background:#8ab070;">
</div>
<div class="a" style="left:12px;top:69px;width:3px;height:2px;background:#6a9a50;">
</div>
<div class="a" style="left:17px;top:69px;width:3px;height:2px;background:#d8a060;">
</div>
<div class="a" style="left:22px;top:69px;width:3px;height:2px;background:#7090c0;">
</div>
<div class="a" style="left:27px;top:69px;width:3px;height:2px;background:#a08070;">
</div>
<div class="a" style="left:32px;top:69px;width:3px;height:2px;background:#c06050;">
</div>
<div class="a" style="left:37px;top:69px;width:3px;height:2px;background:#6090a0;">
</div>
<div class="a" style="left:68px;top:69px;width:12px;height:2px;background:#9cc080;">
</div>
</div>
<div class="t" style="left:466px;top:301px;width:130px;text-align:center;font-size:12px;letter-spacing:-0.38px">Screenshot (13)</div>
<div class="a" style="left:215px;top:322px;width:90px;height:71px;box-shadow:1px 1px 2px rgba(0,0,0,.3);overflow:hidden">
<svg class="a" style="left:0;top:0" width="90" height="72">
<defs>
<linearGradient id="gbg" x1="0" y1="0" x2="0.25" y2="1">
<stop offset="0" stop-color="#dfe428"/>
<stop offset=".5" stop-color="#b8dc30"/>
<stop offset="1" stop-color="#88cc2c"/>
</linearGradient>
<radialGradient id="gtr" cx="0.8" cy="0.15" r="0.45">
<stop offset="0" stop-color="#f4f4b0" stop-opacity=".85"/>
<stop offset="1" stop-color="#f0f070" stop-opacity="0"/>
</radialGradient>
<linearGradient id="lf" x1="0" y1="0" x2="1" y2="0">
<stop offset="0" stop-color="#5aa818"/>
<stop offset=".35" stop-color="#8ccc30"/>
<stop offset=".5" stop-color="#b4e050"/>
<stop offset=".65" stop-color="#8ccc30"/>
<stop offset="1" stop-color="#62ac1c"/>
</linearGradient>
<pattern id="vein" width="3" height="3" patternUnits="userSpaceOnUse" patternTransform="rotate(-35)">
<rect width="3" height="1" fill="#4a9014" opacity=".35"/>
</pattern>
</defs>
<rect width="90" height="72" fill="url(#gbg)"/>
<rect width="90" height="72" fill="url(#gtr)"/>
<path d="M73 6C60 20 58 44 75 66C80 50 81 26 73 6z" fill="url(#lf)"/>
<path d="M73 6C60 20 58 44 75 66C80 50 81 26 73 6z" fill="url(#vein)"/>
<path d="M88 0C75 10 73 36 86 56C92 40 93 16 88 0z" fill="url(#lf)"/>
<path d="M88 0C75 10 73 36 86 56C92 40 93 16 88 0z" fill="url(#vein)"/>
<rect y="67" width="90" height="5" fill="#3c7c2a" opacity=".85"/>
</svg>
<div class="a" style="left:0px;top:10px;width:60px;height:44px;background:#fff;border:1px solid #7cc03a;border-top-width:3px">
</div>
<div class="a" style="left:1px;top:13px;width:3px;height:3px;background:#1a8ae0;border-radius:50%">
</div>
<div class="a" style="left:2px;top:17px;width:11px;height:3px;background:#667;">
</div>
<div class="a" style="left:2px;top:22px;width:26px;height:8px;background:repeating-linear-gradient(#b8cce8 0 1px,#fff 1px 2px);">
</div>
<div class="a" style="left:45px;top:18px;width:12px;height:1px;background:#aab;">
</div>
<div class="a" style="left:45px;top:22px;width:10px;height:1px;background:#aab;">
</div>
<div class="a" style="left:24px;top:31px;width:14px;height:1px;background:#3a6ae0;">
</div>
<div class="a" style="left:14px;top:35px;width:30px;height:1px;background:#99a;">
</div>
<div class="a" style="left:48px;top:33px;width:8px;height:4px;background:#ccc;">
</div>
<div class="a" style="left:28px;top:39px;width:10px;height:1px;background:#4a7ae0;">
</div>
<div class="a" style="left:8px;top:44px;width:7px;height:2px;background:#bbb;">
</div>
<div class="a" style="left:18px;top:43px;width:6px;height:3px;background:#3a7a20;">
</div>
<div class="a" style="left:26px;top:44px;width:9px;height:1px;background:#bbb;">
</div>
<div class="a" style="left:38px;top:42px;width:4px;height:4px;background:#8ab0e0;">
</div>
<div class="a" style="left:45px;top:44px;width:10px;height:1px;background:#bbb;">
</div>
<div class="a" style="left:3px;top:48px;width:4px;height:4px;background:conic-gradient(#e33,#fc0,#3b3,#19e,#e33);">
</div>
<div class="a" style="left:10px;top:49px;width:12px;height:1px;background:#99b;">
</div>
<div class="a" style="left:33px;top:48px;width:4px;height:3px;background:#335;">
</div>
<div class="a" style="left:39px;top:49px;width:14px;height:1px;background:#99b;">
</div>
<div class="a" style="left:2px;top:69px;width:3px;height:2px;background:#cde0b0;">
</div>
<div class="a" style="left:7px;top:69px;width:3px;height:2px;background:#8ab070;">
</div>
<div class="a" style="left:12px;top:69px;width:3px;height:2px;background:#6a9a50;">
</div>
<div class="a" style="left:17px;top:69px;width:3px;height:2px;background:#d8a060;">
</div>
<div class="a" style="left:22px;top:69px;width:3px;height:2px;background:#7090c0;">
</div>
<div class="a" style="left:27px;top:69px;width:3px;height:2px;background:#a08070;">
</div>
<div class="a" style="left:32px;top:69px;width:3px;height:2px;background:#c06050;">
</div>
<div class="a" style="left:37px;top:69px;width:3px;height:2px;background:#6090a0;">
</div>
<div class="a" style="left:68px;top:69px;width:12px;height:2px;background:#9cc080;">
</div>
</div>
<div class="t" style="left:196px;top:399px;width:130px;text-align:center;font-size:12px;letter-spacing:-0.38px">Screenshot (12)</div>
<!-- status -->
<div class="n" style="left:22px;top:467px;color:#1e1e1e">7 items</div>
<div class="a" style="left:70px;top:467px;width:1px;height:11px;background:#eee"></div>
<svg class="a" style="left:571px;top:465.5px" width="17" height="13"><rect x="0.5" y="0.5" width="4" height="3.5" rx=".8" fill="#f4f4f4" stroke="#9aa"/><rect x="2" y="1.8" width="1" height="1" fill="#5a5"/><rect x="0.5" y="4.5" width="4" height="3.5" rx=".8" fill="#f4f4f4" stroke="#9aa"/><rect x="2" y="5.8" width="1" height="1" fill="#e33"/><rect x="0.5" y="8.5" width="4" height="3.5" rx=".8" fill="#f4f4f4" stroke="#9aa"/><rect x="2" y="9.8" width="1" height="1" fill="#36d"/><path d="M6 2.2h4M11 2.2h4M6 6.2h4M11 6.2h4M6 10.2h4M11 10.2h4" stroke="#666" stroke-width="1.1"/></svg>
<div class="a" style="left:590px;top:461px;width:22px;height:23px;background:#cce6f6;border:1px solid #3ea3e3"></div>
<svg class="a" style="left:595px;top:467px" width="14" height="12"><defs><linearGradient id="vp" x1="0" y1="0" x2="0" y2="1"><stop offset="0" stop-color="#3a8ad8"/><stop offset=".4" stop-color="#c8e8f4"/><stop offset=".65" stop-color="#4a9a48"/><stop offset="1" stop-color="#3070b8"/></linearGradient></defs><rect x="0.5" y="0.5" width="13" height="11" fill="#fff" stroke="#a8aeb6"/><rect x="2" y="2" width="10" height="8" fill="url(#vp)"/></svg>
</body></html>
